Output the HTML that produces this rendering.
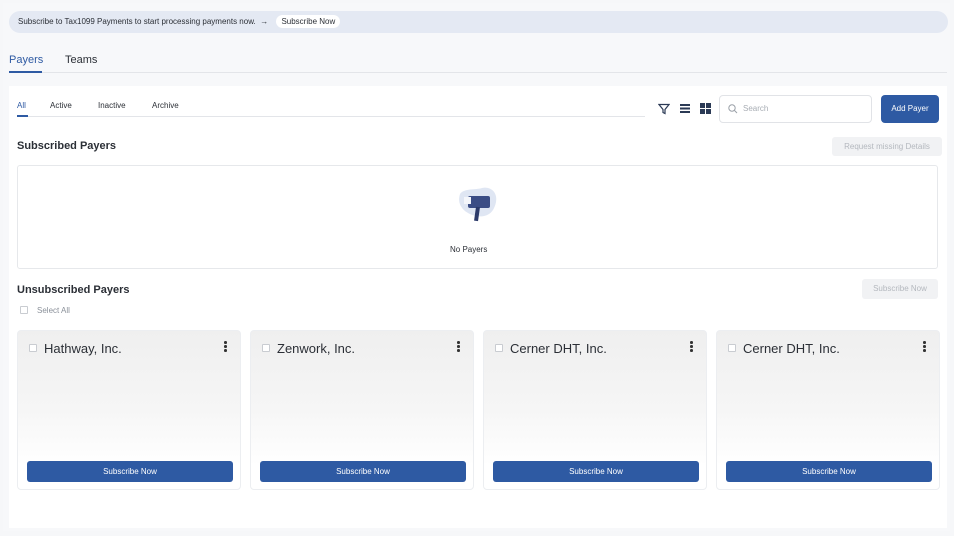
<!DOCTYPE html>
<html><head><style>
*{box-sizing:border-box;margin:0;padding:0}
body{width:954px;height:536px;background:#f6f7f9;font-family:"Liberation Sans",sans-serif;color:#2b2f36;position:relative;overflow:hidden}
.a{position:absolute}
.banner{left:9px;top:11px;width:939px;height:22px;background:#e4e9f3;border-radius:11px;font-size:8px;line-height:22px;padding-left:9px;color:#2b2f36}
.banner span.b{background:#fff;border-radius:8px;padding:2px 5px;margin-left:6px}
.tab{font-size:11px;top:54px}
.panel{left:9px;top:86px;width:938px;height:442px;background:#fff}
.st{font-size:8px;top:101px;color:#2b2f36}
.h{font-size:11px;font-weight:bold;color:#2b2f36}
.card{width:224px;height:160px;top:330px;border:1px solid #eceef1;border-radius:4px;background:linear-gradient(#efefef,#f6f6f6 50%,#fff 85%)}
.card .cb{position:absolute;left:11px;top:13px;width:8px;height:8px;border:1px solid #c9ccd1;border-radius:1px;background:#fff}
.card .t{position:absolute;left:26px;top:10px;font-size:13px;color:#2b2f36}
.card .d{position:absolute;right:13px;top:10px;width:3px}
.card .d i{display:block;width:2.5px;height:2.5px;background:#333;border-radius:50%;margin-bottom:1.5px}
.card .btn{position:absolute;left:9px;top:130px;width:206px;height:21px;background:#2e5aa3;border-radius:3px;color:#fff;font-size:8px;text-align:center;line-height:21px}
</style></head><body>
<div class="a" style="left:3px;top:3px;width:947px;height:528px;background:#f7f8fa"></div>
<div class="a banner">Subscribe to Tax1099 Payments to start processing payments now. &nbsp;→ <span class="b">Subscribe Now</span></div>
<div class="a tab" style="left:9px;color:#2e5aa3">Payers</div>
<div class="a tab" style="left:65px;color:#2b2f36">Teams</div>
<div class="a" style="left:9px;top:72px;width:938px;height:1px;background:#e3e5e9"></div>
<div class="a" style="left:9px;top:71px;width:33px;height:2px;background:#2e5aa3"></div>
<div class="a panel"></div>
<div class="a st" style="left:17px;color:#2e5aa3">All</div>
<div class="a st" style="left:50px">Active</div>
<div class="a st" style="left:98px">Inactive</div>
<div class="a st" style="left:152px">Archive</div>
<div class="a" style="left:17px;top:116px;width:628px;height:1px;background:#e3e5e9"></div>
<div class="a" style="left:17px;top:115px;width:11px;height:2px;background:#2e5aa3"></div>
<svg class="a" style="left:658px;top:103px" width="12" height="12" viewBox="0 0 12 12"><path d="M1 1.5h10L7 6.5v4L5 9.5v-3z" fill="none" stroke="#2b3a55" stroke-width="1.2"/></svg>
<svg class="a" style="left:680px;top:104px" width="10" height="9" viewBox="0 0 10 9"><rect x="0" y="0" width="10" height="2" fill="#2b3a55"/><rect x="0" y="3.5" width="10" height="2" fill="#2b3a55"/><rect x="0" y="7" width="10" height="2" fill="#2b3a55"/></svg>
<svg class="a" style="left:700px;top:103px" width="11" height="11" viewBox="0 0 11 11"><rect width="5" height="5" fill="#2b3a55"/><rect x="6" width="5" height="5" fill="#2b3a55"/><rect y="6" width="5" height="5" fill="#2b3a55"/><rect x="6" y="6" width="5" height="5" fill="#2b3a55"/></svg>
<div class="a" style="left:719px;top:95px;width:153px;height:28px;border:1px solid #e1e3e7;border-radius:4px"></div>
<svg class="a" style="left:728px;top:104px" width="10" height="10" viewBox="0 0 10 10"><circle cx="4" cy="4" r="3.2" fill="none" stroke="#9aa0a8" stroke-width="1"/><path d="M6.4 6.4L9 9" stroke="#9aa0a8"/></svg>
<div class="a" style="left:743px;top:104px;font-size:8px;color:#a8adb4">Search</div>
<div class="a" style="left:881px;top:95px;width:58px;height:28px;background:#2e5aa3;border-radius:4px;color:#fff;font-size:8px;text-align:center;line-height:28px">Add Payer</div>
<div class="a h" style="left:17px;top:140px">Subscribed Payers</div>
<div class="a" style="left:832px;top:137px;width:110px;height:19px;background:#f1f2f4;border-radius:3px;color:#b4b8be;font-size:8px;text-align:center;line-height:19px">Request missing Details</div>
<div class="a" style="left:17px;top:165px;width:921px;height:104px;border:1px solid #e6e8eb;border-radius:3px"></div>
<svg class="a" style="left:454px;top:186px" width="46" height="40" viewBox="0 0 46 40"><path d="M6 8C10 2 22 4 28 2 36 0 44 6 42 16 40 26 34 32 22 30 12 28 2 20 6 8z" fill="#dfe6f3"/><rect x="14" y="10" width="22" height="12" rx="2" fill="#3b4d85"/><rect x="10" y="11" width="7" height="7" fill="#f4f6fb"/><rect x="22" y="21" width="4" height="14" fill="#2c3a6a" transform="rotate(8 24 21)"/></svg>
<div class="a" style="left:450px;top:245px;font-size:8px">No Payers</div>
<div class="a h" style="left:17px;top:284px">Unsubscribed Payers</div>
<div class="a" style="left:862px;top:279px;width:76px;height:20px;background:#f1f2f4;border-radius:3px;color:#b4b8be;font-size:8px;text-align:center;line-height:20px">Subscribe Now</div>
<div class="a" style="left:20px;top:306px;width:8px;height:8px;border:1px solid #c9ccd1;border-radius:1px"></div>
<div class="a" style="left:37px;top:306px;font-size:8px;color:#8a9099">Select All</div>
<div class="a card" style="left:17px"><div class="cb"></div><div class="t">Hathway, Inc.</div><div class="d"><i></i><i></i><i></i></div><div class="btn">Subscribe Now</div></div>
<div class="a card" style="left:250px"><div class="cb"></div><div class="t">Zenwork, Inc.</div><div class="d"><i></i><i></i><i></i></div><div class="btn">Subscribe Now</div></div>
<div class="a card" style="left:483px"><div class="cb"></div><div class="t">Cerner DHT, Inc.</div><div class="d"><i></i><i></i><i></i></div><div class="btn">Subscribe Now</div></div>
<div class="a card" style="left:716px"><div class="cb"></div><div class="t">Cerner DHT, Inc.</div><div class="d"><i></i><i></i><i></i></div><div class="btn">Subscribe Now</div></div>
</body></html>
